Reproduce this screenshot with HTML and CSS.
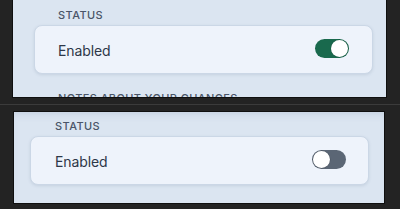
FILE: index.html
```html
<!DOCTYPE html>
<html lang="en">
<head>
    <meta charset="UTF-8" />
    <meta name="viewport" content="width=device-width, initial-scale=1.0" />
    <title>Status toggle</title>
    <link rel="stylesheet" href="styles.css">
</head>
<body>
    <div class="shot shot-top">
        <div class="panel panel-top">
            <div class="field-label">Status</div>
            <div class="setting-card">
                <span class="setting-name">Enabled</span>
                <span class="toggle on"><span class="knob"></span></span>
            </div>
            <div class="field-label next-label">Notes about your changes</div>
        </div>
    </div>

    <div class="divider"></div>

    <div class="shot shot-bottom">
        <div class="panel panel-bottom">
            <div class="field-label">Status</div>
            <div class="setting-card">
                <span class="setting-name">Enabled</span>
                <span class="toggle off"><span class="knob"></span></span>
            </div>
        </div>
    </div>
</body>
</html>
```

FILE: styles.css
```css
body {
    margin: 0;
    background: #232323;
    font-family: 'Inter', 'Noto Sans', sans-serif;
    color: #2d3748;
}
.shot {
    overflow: hidden;
}
.shot-top {
    height: 104px;
}
.divider {
    height: 1px;
    background: #3b3b3b;
}
.shot-bottom {
    padding-top: 6px;
    height: 98px;
}
.panel {
    box-sizing: border-box;
    background: #dbe5f1;
    border: 1px solid #0f0f0f;
    overflow: hidden;
    box-shadow: inset 0 6px 10px -6px rgba(90, 110, 140, 0.25);
}
.panel-top {
    margin-left: 12px;
    width: 375px;
    height: 98px;
    border-top: 0;
    padding: 9px 0 0 21px;
    box-shadow: none;
}
.panel-bottom {
    margin-left: 13px;
    width: 372px;
    height: 93px;
    padding: 8px 0 0 16px;
}
.field-label {
    font-size: 11px;
    line-height: 13px;
    font-weight: 500;
    letter-spacing: 0.4px;
    text-transform: uppercase;
    color: #4a5568;
    padding-left: 24px;
}
.panel-bottom .field-label {
    padding-left: 25px;
}
.next-label {
    margin-top: 18px;
}
.setting-card {
    box-sizing: border-box;
    width: 339px;
    height: 49px;
    margin-top: 3px;
    background: #eef3fb;
    border: 1px solid #cbd7e6;
    border-radius: 8px;
    box-shadow: 0 1px 3px rgba(80, 100, 130, 0.15);
    display: flex;
    align-items: center;
    justify-content: space-between;
    padding: 1px 23px 0 23px;
}
.panel-bottom .setting-card {
    padding-left: 24px;
    padding-right: 22px;
}
.setting-name {
    font-size: 14px;
    letter-spacing: -0.1px;
    color: #2d3748;
}
.toggle {
    box-sizing: border-box;
    width: 34px;
    height: 19px;
    margin-bottom: 3px;
    border-radius: 10px;
    display: flex;
    align-items: center;
    padding: 0 1px;
}
.toggle.on {
    background: #19694d;
    justify-content: flex-end;
}
.toggle.off {
    background: #5b6675;
    justify-content: flex-start;
}
.knob {
    width: 17px;
    height: 17px;
    border-radius: 50%;
    background: #ffffff;
    box-shadow: 0 0 0 0.5px rgba(0, 0, 0, 0.2);
}
```
